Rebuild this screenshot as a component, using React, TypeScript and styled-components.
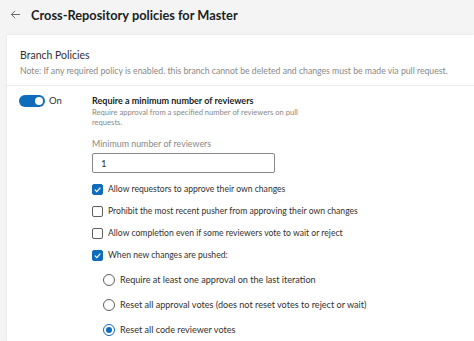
import React from "react";
import styled, { createGlobalStyle } from "styled-components";

const Global = createGlobalStyle`
  html, body { margin: 0; padding: 0; background: #f4f4f4; }
  body { font-family: Lato, "Open Sans", sans-serif; color: #323130; }
  * { box-sizing: border-box; }
`;

const Page = styled.div`
  width: 474px;
  height: 341px;
  overflow: hidden;
  background: #f4f4f4;
  display: flex;
  flex-direction: column;
`;

const Header = styled.div`
  height: 35px;
  flex: none;
  display: flex;
  align-items: center;
  padding-left: 10px;
  gap: 10px;
  padding-bottom: 6px;
`;

const BackBtn = styled.svg`
  width: 11px;
  height: 11px;
  flex: none;
`;

const Title = styled.h1`
  margin: 0;
  font-size: 12.8px;
  font-weight: 700;
  color: #201f1e;
`;

const Card = styled.div`
  margin-left: 7px;
  flex: 1;
  background: #fff;
  box-shadow: 0 0 2px rgba(0, 0, 0, 0.1);
  display: flex;
  flex-direction: column;
`;

const CardHead = styled.div`
  padding: 13px 13px 8px;
  border-bottom: 1px solid #ececec;
  display: flex;
  flex-direction: column;
  gap: 3px;
`;

const CardTitle = styled.div`
  font-size: 10.5px;
  line-height: 14px;
  color: #323130;
`;

const Note = styled.div`
  font-size: 8.7px;
  line-height: 12px;
  color: #8a8886;
  white-space: nowrap;
`;

const Body = styled.div`
  display: flex;
  padding: 9px 12px 0;
`;

const ToggleCol = styled.div`
  width: 73px;
  flex: none;
  display: flex;
  align-items: flex-start;
  gap: 4px;
`;

const Toggle = styled.div<{ $on: boolean }>`
  width: 26px;
  height: 12px;
  border-radius: 6px;
  background: ${(p) => (p.$on ? "#0f6cbd" : "#fff")};
  position: relative;
  &::after {
    content: "";
    position: absolute;
    top: 2px;
    left: ${(p) => (p.$on ? "16px" : "2px")};
    width: 8px;
    height: 8px;
    border-radius: 50%;
    background: #fff;
  }
`;

const ToggleLabel = styled.span`
  font-size: 9.5px;
  line-height: 12px;
  color: #323130;
`;

const Settings = styled.div`
  display: flex;
  flex-direction: column;
`;

const PolicyTitle = styled.div`
  font-size: 9px;
  font-weight: 700;
  color: #201f1e;
  line-height: 12px;
`;

const PolicyDesc = styled.div`
  font-size: 7.6px;
  color: #8a8886;
  line-height: 10px;
  width: 214px;
`;

const FieldLabel = styled.div`
  margin-top: 11px;
  font-size: 8.9px;
  line-height: 12px;
  color: #8a8886;
`;

const Input = styled.div`
  margin-top: 3px;
  width: 183px;
  height: 20px;
  border: 1px solid #8a8886;
  border-radius: 2px;
  font-size: 9.5px;
  padding-left: 8px;
  display: flex;
  align-items: center;
  color: #323130;
`;

const Group = styled.div<{ $mt: number }>`
  margin-top: ${(p) => p.$mt}px;
  display: flex;
  flex-direction: column;
`;

const Row = styled.div<{ $indent?: boolean; $h: number; $fs: number }>`
  height: ${(p) => p.$h}px;
  display: flex;
  align-items: center;
  gap: 5px;
  padding-left: ${(p) => (p.$indent ? "11px" : "0")};
  font-size: ${(p) => p.$fs}px;
  color: #323130;
  white-space: nowrap;
`;

const Box = styled.span<{ $checked: boolean }>`
  width: 11px;
  height: 11px;
  border-radius: 2px;
  flex: none;
  border: 1px solid ${(p) => (p.$checked ? "#0f6cbd" : "#605e5c")};
  background: ${(p) => (p.$checked ? "#0f6cbd" : "#fff")};
  display: flex;
  align-items: center;
  justify-content: center;
`;

const Radio = styled.span<{ $checked: boolean }>`
  width: 12px;
  height: 12px;
  border-radius: 50%;
  flex: none;
  border: 1px solid ${(p) => (p.$checked ? "#0f6cbd" : "#605e5c")};
  background: #fff;
  display: flex;
  align-items: center;
  justify-content: center;
  &::after {
    content: "";
    display: ${(p) => (p.$checked ? "block" : "none")};
    width: 6px;
    height: 6px;
    border-radius: 50%;
    background: #0f6cbd;
  }
`;

const Check = () => (
  <svg width="9" height="9" viewBox="0 0 10 10">
    <path d="M2 5.2 L4.2 7.3 L8.2 2.8" fill="none" stroke="#fff" strokeWidth="1.3" />
  </svg>
);

const checks = [
  { label: "Allow requestors to approve their own changes", checked: true },
  { label: "Prohibit the most recent pusher from approving their own changes", checked: false },
  { label: "Allow completion even if some reviewers vote to wait or reject", checked: false },
  { label: "When new changes are pushed:", checked: true },
];

const radios = [
  { label: "Require at least one approval on the last iteration", checked: false },
  { label: "Reset all approval votes (does not reset votes to reject or wait)", checked: false },
  { label: "Reset all code reviewer votes", checked: true },
];

export default function App() {
  return (
    <Page>
      <Global />
      <Header>
        <BackBtn viewBox="0 0 12 12">
          <path d="M11 6 H1.5 M5.5 2 L1.5 6 L5.5 10" fill="none" stroke="#605e5c" strokeWidth="1" />
        </BackBtn>
        <Title>Cross-Repository policies for Master</Title>
      </Header>
      <Card>
        <CardHead>
          <CardTitle>Branch Policies</CardTitle>
          <Note>
            Note: If any required policy is enabled. this branch cannot be deleted and changes must be made via pull request.
          </Note>
        </CardHead>
        <Body>
          <ToggleCol>
            <Toggle $on />
            <ToggleLabel>On</ToggleLabel>
          </ToggleCol>
          <Settings>
            <PolicyTitle>Require a minimum number of reviewers</PolicyTitle>
            <PolicyDesc>Require approval from a specified number of reviewers on pull requests.</PolicyDesc>
            <FieldLabel>Minimum number of reviewers</FieldLabel>
            <Input>1</Input>
            <Group $mt={5}>
              {checks.map((c) => (
                <Row key={c.label} $h={22} $fs={8.6}>
                  <Box $checked={c.checked}>{c.checked && <Check />}</Box>
                  {c.label}
                </Row>
              ))}
            </Group>
            <Group $mt={1}>
              {radios.map((r) => (
                <Row key={r.label} $indent $h={25} $fs={9.1}>
                  <Radio $checked={r.checked} />
                  {r.label}
                </Row>
              ))}
            </Group>
          </Settings>
        </Body>
      </Card>
    </Page>
  );
}
